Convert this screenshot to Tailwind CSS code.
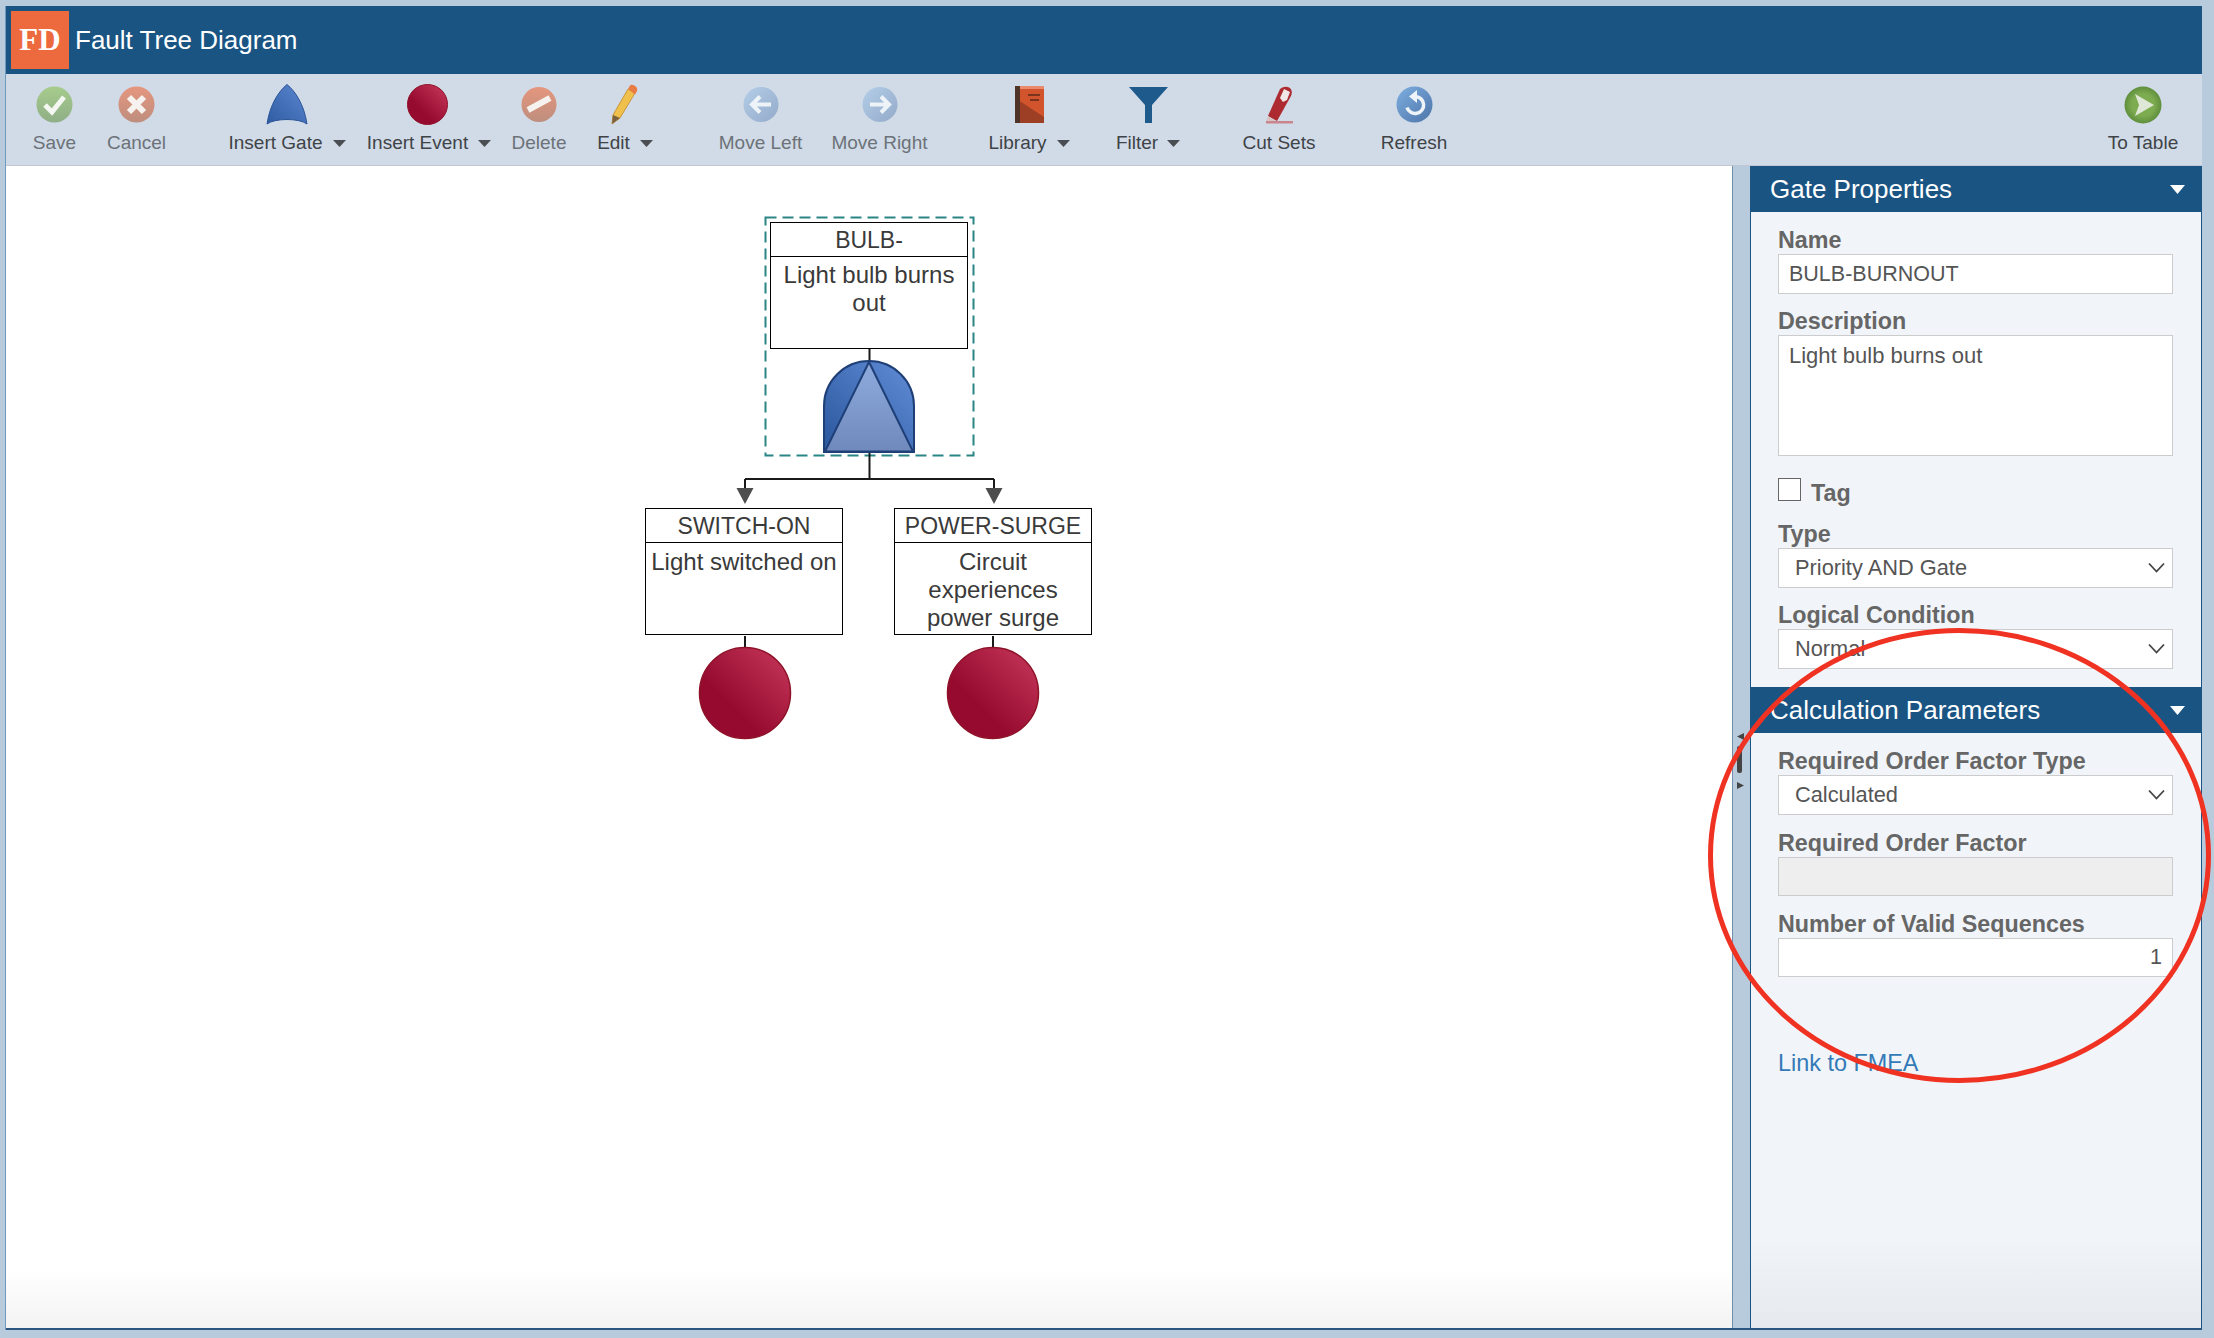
<!DOCTYPE html>
<html lang="en">

<head>
    <meta charset="UTF-8">
    <title>Fault Tree Diagram</title>
    <script src="https://cdn.jsdelivr.net/npm/@tailwindcss/browser@4"></script>
</head>

<body class="h-screen overflow-hidden bg-[#b7cbdc] pt-[6px] pl-[5px] pr-[12px] pb-[8px] font-['Liberation_Sans',Arial,sans-serif]">

    <div class="h-full flex flex-col border-l border-[#6f9ac0]">

        <!-- Header -->
        <header class="h-[68px] bg-[#1a5483] flex items-center pl-[5px] shrink-0">
            <div class="w-[58px] h-[58px] bg-[#ec6a3d] flex items-center justify-center text-white font-bold text-[31px] font-['Liberation_Serif',serif]">FD</div>
            <h1 class="ml-[6px] text-white text-[26px] leading-none">Fault Tree Diagram</h1>
        </header>

        <!-- Toolbar -->
        <div class="h-[92px] bg-[#d0dbe7] border-b border-[#bfc8d2] flex pt-[10px] shrink-0 text-[19px] leading-[22px] text-[#3f4347] whitespace-nowrap">
            <button class="ml-[27px] w-[43px] flex flex-col items-center text-[#6c7278]">
                <span class="h-[41px] flex items-center blur-[0.6px]">
                    <svg width="37" height="37" viewBox="0 0 37 37"><defs><linearGradient id="gs" x1="0" y1="0" x2="0" y2="1"><stop offset="0" stop-color="#a6cc8c"/><stop offset="1" stop-color="#8fae86"/></linearGradient></defs><circle cx="18.5" cy="18.5" r="18" fill="url(#gs)"/><path d="M9 19l7 7 12-15" fill="none" stroke="#f4f7f2" stroke-width="5"/></svg>
                </span>
                <span class="mt-[7px]">Save</span>
            </button>
            <button class="ml-[31px] w-[59px] flex flex-col items-center text-[#6c7278]">
                <span class="h-[41px] flex items-center blur-[0.6px]">
                    <svg width="37" height="37" viewBox="0 0 37 37"><defs><linearGradient id="gc" x1="0" y1="0" x2="0" y2="1"><stop offset="0" stop-color="#e5967e"/><stop offset="1" stop-color="#be8e7e"/></linearGradient></defs><circle cx="18.5" cy="18.5" r="18" fill="url(#gc)"/><path d="M11 11l15 15M26 11L11 26" stroke="#f6f2f0" stroke-width="6"/></svg>
                </span>
                <span class="mt-[7px]">Cancel</span>
            </button>
            <button class="ml-[62px] w-[118px] flex flex-col items-center">
                <span class="h-[41px] flex items-center blur-[0.4px]">
                    <svg width="42" height="41" viewBox="0 0 42 41"><defs><linearGradient id="gg" x1="0" y1="1" x2="1" y2="0"><stop offset="0" stop-color="#2f5ba2"/><stop offset="1" stop-color="#5c88d2"/></linearGradient></defs><path d="M21 .5C29 7 38 20 41 40 33 34 9 34 1 40 4 20 13 7 21 .5z" fill="url(#gg)" stroke="#2a5396"/></svg>
                </span>
                <span class="mt-[7px] flex items-center gap-[10px]">Insert Gate
                    <svg width="13" height="7" viewBox="0 0 13 7"><path d="M0 0h13L6.5 7z" fill="#4a4d52"/></svg></span>
            </button>
            <button class="ml-[21px] w-[124px] flex flex-col items-center">
                <span class="h-[41px] flex items-center -ml-[3px] blur-[0.4px]">
                    <svg width="41" height="41" viewBox="0 0 41 41"><defs><linearGradient id="ge" x1="0" y1="1" x2="1" y2="0"><stop offset="0.35" stop-color="#960a30"/><stop offset="1" stop-color="#c83a5c"/></linearGradient></defs><circle cx="20.5" cy="20.5" r="20" fill="url(#ge)" stroke="#8e1228"/></svg>
                </span>
                <span class="mt-[7px] flex items-center gap-[10px]">Insert Event
                    <svg width="13" height="7" viewBox="0 0 13 7"><path d="M0 0h13L6.5 7z" fill="#4a4d52"/></svg></span>
            </button>
            <button class="ml-[21px] w-[54px] flex flex-col items-center text-[#6c7278]">
                <span class="h-[41px] flex items-center blur-[0.6px]">
                    <svg width="36" height="37" viewBox="0 0 36 37"><circle cx="18" cy="18.5" r="17.5" fill="url(#gc)"/><path d="M7 24L29 12" stroke="#f6f2f0" stroke-width="6"/></svg>
                </span>
                <span class="mt-[7px]">Delete</span>
            </button>
            <button class="ml-[31px] w-[56px] flex flex-col items-center">
                <span class="h-[41px] flex items-center -ml-[3px] blur-[0.4px]">
                    <svg width="28" height="41" viewBox="0 0 28 41"><path d="M2 40l1-9L18 5l7 4L10 34z" fill="#f0c04c" stroke="#c8953a"/><path d="M18 5l2-3.500q2-1.500 5 .5t2 5l-2 3.500z" fill="#e97b45"/><path d="M2 40l1-9 7 3z" fill="#7a6242"/></svg>
                </span>
                <span class="mt-[7px] flex items-center gap-[10px]">Edit
                    <svg width="13" height="7" viewBox="0 0 13 7"><path d="M0 0h13L6.5 7z" fill="#4a4d52"/></svg></span>
            </button>
            <button class="ml-[65px] w-[85px] flex flex-col items-center text-[#6c7278]">
                <span class="h-[41px] flex items-center blur-[0.6px]">
                    <svg width="36" height="37" viewBox="0 0 36 37"><defs><linearGradient id="gm" x1="0" y1="0" x2="1" y2="1"><stop offset="0" stop-color="#b4cde8"/><stop offset="1" stop-color="#93abc9"/></linearGradient></defs><circle cx="18" cy="18.5" r="17.500" fill="url(#gm)"/><path d="M28 18.500H10M17 10.500l-8 8 8 8" fill="none" stroke="#eef3f8" stroke-width="4"/></svg>
                </span>
                <span class="mt-[7px]">Move Left</span>
            </button>
            <button class="ml-[28px] w-[97px] flex flex-col items-center text-[#6c7278]">
                <span class="h-[41px] flex items-center blur-[0.6px]">
                    <svg width="36" height="37" viewBox="0 0 36 37"><circle cx="18" cy="18.5" r="17.500" fill="url(#gm)"/><path d="M8 18.500h18M19 10.500l8 8-8 8" fill="none" stroke="#eef3f8" stroke-width="4"/></svg>
                </span>
                <span class="mt-[7px]">Move Right</span>
            </button>
            <button class="ml-[61px] w-[80px] flex flex-col items-center">
                <span class="h-[41px] flex items-center blur-[0.6px]">
                    <svg width="29" height="37" viewBox="0 0 29 37"><rect width="29" height="37" rx="2" fill="#d2542c"/><path d="M0 37V12l29 19v6z" fill="#9c3f24"/><rect x="0" width="5" height="37" fill="#4f3328"/><rect x="5" y="0" width="24" height="3" fill="#e98a6d"/><path d="M13 9h12M15 14h9" stroke="#5e2a1a" stroke-width="1.500"/></svg>
                </span>
                <span class="mt-[7px] flex items-center gap-[10px]">Library
                    <svg width="13" height="7" viewBox="0 0 13 7"><path d="M0 0h13L6.5 7z" fill="#4a4d52"/></svg></span>
            </button>
            <button class="ml-[47px] w-[64px] flex flex-col items-center">
                <span class="h-[41px] flex items-center blur-[0.4px]">
                    <svg width="39" height="37" viewBox="0 0 39 37"><path d="M0 1h39L23 19v18h-7V19z" fill="#1e5a8c"/></svg>
                </span>
                <span class="mt-[7px] flex items-center gap-[9px]">Filter
                    <svg width="13" height="7" viewBox="0 0 13 7"><path d="M0 0h13L6.5 7z" fill="#4a4d52"/></svg></span>
            </button>
            <button class="ml-[62px] w-[74px] flex flex-col items-center">
                <span class="h-[41px] flex items-center blur-[0.5px]">
                    <svg width="29" height="39" viewBox="0 0 29 39"><path d="M3 31L15 4q5-4 10-1 3 3 1 8L12 36z" fill="#ad2a30"/><path d="M15 13l4-9 6 3-3 8-4 2z" fill="#efe6e5"/><path d="M3 31l-2 6 9-1z" fill="#d9c3c2"/><rect x="1" y="36" width="27" height="2.500" fill="#c9868c"/></svg>
                </span>
                <span class="mt-[7px]">Cut Sets</span>
            </button>
            <button class="ml-[66px] w-[64px] flex flex-col items-center">
                <span class="h-[41px] flex items-center blur-[0.5px]">
                    <svg width="37" height="37" viewBox="0 0 37 37"><defs><linearGradient id="gr" x1="0" y1="0" x2="1" y2="1"><stop offset="0" stop-color="#7eaee0"/><stop offset="1" stop-color="#4d74a8"/></linearGradient></defs><circle cx="18.5" cy="18.5" r="18" fill="url(#gr)"/><path d="M19 10.500a8.500 8.500 0 1 1-8 11" fill="none" stroke="#eef3f8" stroke-width="3.500"/><path d="M21 4v13l-8-6.500z" fill="#eef3f8"/></svg>
                </span>
                <span class="mt-[7px]">Refresh</span>
            </button>
            <button class="ml-auto mr-[24px] w-[70px] flex flex-col items-center">
                <span class="h-[41px] flex items-center blur-[0.5px]">
                    <svg width="38" height="38" viewBox="0 0 38 38"><defs><radialGradient id="gt"><stop offset="0.6" stop-color="#7dab50"/><stop offset="1" stop-color="#5f8f3e"/></radialGradient></defs><circle cx="19" cy="19" r="18.500" fill="url(#gt)"/><path d="M11 8l19 11-19 11 4-11z" fill="#dfe8d6"/></svg>
                </span>
                <span class="mt-[7px]">To Table</span>
            </button>
        </div>

        <!-- Main -->
        <div class="flex-1 min-h-0 flex border-b-2 border-[#2a5580]">

            <!-- Diagram canvas -->
            <div class="relative flex-1 bg-linear-to-b from-white from-95% to-[#f3f3f3] text-[24px] leading-[28px] text-[#3a3a3a] text-center">
                <svg class="absolute left-0 top-0" width="1726" height="1163" viewBox="6 166 1726 1163">
                    <defs>
                        <linearGradient id="gate" x1="0" y1="1" x2="1" y2="0"><stop offset="0.1" stop-color="#2f5ba2"/><stop offset="0.9" stop-color="#5c88d2"/></linearGradient>
                        <linearGradient id="tri" x1="0" y1="0" x2="0" y2="1"><stop offset="0" stop-color="#8fabde"/><stop offset="1" stop-color="#7089bc"/></linearGradient>
                        <linearGradient id="ev" x1="0" y1="1" x2="1" y2="0"><stop offset="0.35" stop-color="#960a30"/><stop offset="1" stop-color="#c83a5c"/></linearGradient>
                    </defs>
                    <rect x="765.500" y="217.500" width="208" height="238" fill="none" stroke="#2a8585" stroke-width="2" stroke-dasharray="11 6"/>
                    <path d="M869.500 348v13M869.500 453v26M745 479h249M745 479v10M994 479v10M745 636v11M993 636v11" fill="none" stroke="#1a1a1a" stroke-width="2"/>
                    <path d="M824 452v-46a45 45 0 0 1 90 0v46z" fill="url(#gate)" stroke="#1f3f77" stroke-width="2"/>
                    <path d="M869 362l44 89.500h-88z" fill="url(#tri)" stroke="#1f3f77" stroke-width="2"/>
                    <path d="M736.500 488h17l-8.500 16zM985.500 488h17l-8.500 16z" fill="#4d4d4d"/>
                    <circle cx="745" cy="693" r="45.500" fill="url(#ev)" stroke="#8e1228" stroke-width="1.500"/>
                    <circle cx="993" cy="693" r="45.500" fill="url(#ev)" stroke="#8e1228" stroke-width="1.500"/>
                </svg>

                <div class="absolute left-[764px] top-[56px] w-[198px] h-[127px] border-[1.5px] border-black">
                    <div class="h-[34px] border-b-[1.5px] border-black leading-[35px] text-[23px]">BULB-</div>
                    <p class="pt-[4px]">Light bulb burns out</p>
                </div>
                <div class="absolute left-[639px] top-[342px] w-[198px] h-[127px] border-[1.5px] border-black">
                    <div class="h-[34px] border-b-[1.5px] border-black leading-[35px] text-[23px]">SWITCH-ON</div>
                    <p class="pt-[5px]">Light switched on</p>
                </div>
                <div class="absolute left-[888px] top-[342px] w-[198px] h-[127px] border-[1.5px] border-black">
                    <div class="h-[34px] border-b-[1.5px] border-black leading-[35px] text-[23px]">POWER-SURGE</div>
                    <p class="pt-[5px]">Circuit experiences power surge</p>
                </div>
            </div>

            <!-- Splitter -->
            <div class="relative w-[18px] bg-[#b7cbdc] border-l border-[#6f8fad]">
                <svg class="absolute left-[4px] top-[567px]" width="8" height="56" viewBox="0 0 8 56"><path d="M7 0v7L0 3.500z" fill="#444"/><rect x="0" y="13" width="5" height="27" rx="2" fill="#444"/><path d="M0 49v7l7-3.500z" fill="#444"/></svg>
            </div>

            <!-- Properties panel -->
            <aside class="w-[452px] bg-linear-to-b from-[#f1f5f9] from-92% to-[#e6eaee] border-l border-r border-[#1a5483] text-[#666]">
                <div class="h-[46px] bg-[#1a5483] flex items-center justify-between pl-[19px] pr-[16px] text-white text-[26px]">
                    <span>Gate Properties</span>
                    <svg width="15" height="9" viewBox="0 0 15 9"><path d="M0 0h15L7.500 9z" fill="#fff"/></svg>
                </div>

                <div class="pl-[27px] pr-[28px] pt-[15px]">
                    <label class="block text-[23.300px] font-bold leading-[26px] mb-px">Name</label>
                    <input type="text" value="BULB-BURNOUT" class="block w-full h-[40px] bg-white border border-[#ccc] pl-[10px] text-[21.500px] text-[#555]">

                    <label class="block mt-[14px] text-[23.300px] font-bold leading-[26px] mb-px">Description</label>
                    <textarea class="block w-full h-[121px] bg-white border border-[#ccc] pl-[10px] pt-[6px] text-[22px] leading-[28px] text-[#555] resize-none">Light bulb burns out</textarea>

                    <div class="flex mt-[22px] h-[28px]">
                        <span class="w-[23px] h-[23px] bg-white border-[1.500px] border-[#666]"></span>
                        <span class="ml-[10px] pt-[2px] text-[23.300px] font-bold leading-[26px]">Tag</span>
                    </div>

                    <label class="block mt-[15px] text-[23.300px] font-bold leading-[26px] mb-px">Type</label>
                    <div class="relative">
                        <select class="block w-full h-[40px] appearance-none bg-white border border-[#ccc] pl-[16px] pt-px text-[21.800px] text-[#555]"><option>Priority AND Gate</option></select>
                        <svg class="absolute right-[8px] top-[14px]" width="17" height="12" viewBox="0 0 17 12"><path d="M1 1.500l7.500 8 7.500-8" fill="none" stroke="#444" stroke-width="1.800"/></svg>
                    </div>

                    <label class="block mt-[14px] text-[23.300px] font-bold leading-[26px] mb-px">Logical Condition</label>
                    <div class="relative">
                        <select class="block w-full h-[40px] appearance-none bg-white border border-[#ccc] pl-[16px] pt-px text-[21.800px] text-[#555]"><option>Normal</option></select>
                        <svg class="absolute right-[8px] top-[14px]" width="17" height="12" viewBox="0 0 17 12"><path d="M1 1.500l7.500 8 7.500-8" fill="none" stroke="#444" stroke-width="1.800"/></svg>
                    </div>
                </div>

                <div class="mt-[18px] h-[46px] bg-[#1a5483] flex items-center justify-between pl-[19px] pr-[16px] text-white text-[26px]">
                    <span>Calculation Parameters</span>
                    <svg width="15" height="9" viewBox="0 0 15 9"><path d="M0 0h15L7.500 9z" fill="#fff"/></svg>
                </div>

                <div class="pl-[27px] pr-[28px] pt-[15px]">
                    <label class="block text-[23.300px] font-bold leading-[26px] mb-px">Required Order Factor Type</label>
                    <div class="relative">
                        <select class="block w-full h-[40px] appearance-none bg-white border border-[#ccc] pl-[16px] pt-px text-[21.800px] text-[#555]"><option>Calculated</option></select>
                        <svg class="absolute right-[8px] top-[14px]" width="17" height="12" viewBox="0 0 17 12"><path d="M1 1.500l7.500 8 7.500-8" fill="none" stroke="#444" stroke-width="1.800"/></svg>
                    </div>

                    <label class="block mt-[15px] text-[23.300px] font-bold leading-[26px] mb-px">Required Order Factor</label>
                    <input type="text" disabled class="block w-full h-[39px] bg-[#eee] border border-[#ccc]">

                    <label class="block mt-[15px] text-[23.300px] font-bold leading-[26px] mb-px">Number of Valid Sequences</label>
                    <input type="text" value="1" class="block w-full h-[39px] bg-white border border-[#ccc] pr-[10px] text-right text-[21.500px] text-[#555]">

                    <a href="#" class="block mt-[73px] text-[23.400px] leading-[26px] text-[#337ab7]">Link to FMEA</a>
                </div>
            </aside>
        </div>
    </div>

    <!-- Hand drawn annotation over the screenshot -->
    <svg class="absolute left-0 top-0 pointer-events-none" width="2214" height="1338" viewBox="0 0 2214 1338">
        <ellipse cx="1959.500" cy="855.500" rx="249" ry="225" fill="none" stroke="#f03222" stroke-width="5"/>
    </svg>

</body>

</html>
